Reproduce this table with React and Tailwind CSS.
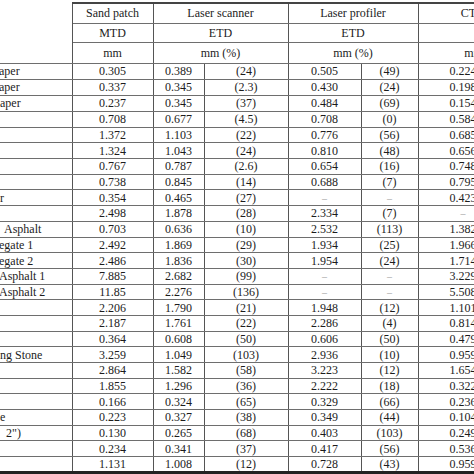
import React from "react";

// visible part of a cropped table: label column and CT column are cut by the frame
const rows = [
  { l: "aper", lc: "-ml-px", h: "h-[16px]", v: ["0.305", "0.389", "(24)", "0.505", "(49)", "0.224"] },
  { l: "aper", lc: "-ml-px", h: "h-[16px]", v: ["0.337", "0.345", "(2.3)", "0.430", "(24)", "0.198"] },
  { l: "aper", lc: "ml-0", h: "h-[16px]", v: ["0.237", "0.345", "(37)", "0.484", "(69)", "0.154"] },
  { l: "", lc: "ml-0", h: "h-[16px]", v: ["0.708", "0.677", "(4.5)", "0.708", "(0)", "0.584"] },
  { l: "", lc: "ml-0", h: "h-[15.7px]", v: ["1.372", "1.103", "(22)", "0.776", "(56)", "0.685"] },
  { l: "", lc: "ml-0", h: "h-[15.7px]", v: ["1.324", "1.043", "(24)", "0.810", "(48)", "0.656"] },
  { l: "", lc: "ml-0", h: "h-[15.7px]", v: ["0.767", "0.787", "(2.6)", "0.654", "(16)", "0.748"] },
  { l: "", lc: "ml-0", h: "h-[15.7px]", v: ["0.738", "0.845", "(14)", "0.688", "(7)", "0.795"] },
  { l: "r", lc: "ml-0", h: "h-[15.7px]", v: ["0.354", "0.465", "(27)", "–", "–", "0.423"] },
  { l: "", lc: "ml-0", h: "h-[15.7px]", v: ["2.498", "1.878", "(28)", "2.334", "(7)", "–"] },
  { l: "Asphalt", lc: "ml-[4px]", h: "h-[15.7px]", v: ["0.703", "0.636", "(10)", "2.532", "(113)", "1.382"] },
  { l: "egate 1", lc: "-ml-px", h: "h-[15.7px]", v: ["2.492", "1.869", "(29)", "1.934", "(25)", "1.966"] },
  { l: "egate 2", lc: "-ml-px", h: "h-[15.7px]", v: ["2.486", "1.836", "(30)", "1.954", "(24)", "1.714"] },
  { l: "Asphalt 1", lc: "-ml-px", h: "h-[15.7px]", v: ["7.885", "2.682", "(99)", "–", "–", "3.229"] },
  { l: "Asphalt 2", lc: "-ml-px", h: "h-[15.7px]", v: ["11.85", "2.276", "(136)", "–", "–", "5.508"] },
  { l: "", lc: "ml-0", h: "h-[15.7px]", v: ["2.206", "1.790", "(21)", "1.948", "(12)", "1.101"] },
  { l: "", lc: "ml-0", h: "h-[15.7px]", v: ["2.187", "1.761", "(22)", "2.286", "(4)", "0.814"] },
  { l: "", lc: "ml-0", h: "h-[15.7px]", v: ["0.364", "0.608", "(50)", "0.606", "(50)", "0.479"] },
  { l: "ng Stone", lc: "ml-0", h: "h-[15.7px]", v: ["3.259", "1.049", "(103)", "2.936", "(10)", "0.959"] },
  { l: "", lc: "ml-0", h: "h-[15.7px]", v: ["2.864", "1.582", "(58)", "3.223", "(12)", "1.654"] },
  { l: "", lc: "ml-0", h: "h-[15.7px]", v: ["1.855", "1.296", "(36)", "2.222", "(18)", "0.322"] },
  { l: "", lc: "ml-0", h: "h-[15.7px]", v: ["0.166", "0.324", "(65)", "0.329", "(66)", "0.236"] },
  { l: "e", lc: "ml-0", h: "h-[15.7px]", v: ["0.223", "0.327", "(38)", "0.349", "(44)", "0.104"] },
  { l: "2\")", lc: "ml-[6px]", h: "h-[15.7px]", v: ["0.130", "0.265", "(68)", "0.403", "(103)", "0.249"] },
  { l: "", lc: "ml-0", h: "h-[15.7px]", v: ["0.234", "0.341", "(37)", "0.417", "(56)", "0.536"] },
  { l: "", lc: "ml-0", h: "h-[15.7px]", v: ["1.131", "1.008", "(12)", "0.728", "(43)", "0.959"] },
];

const Val = ({ t }) =>
  t === "–" ? <span className="text-[#9a9a9a] text-[10px]">–</span> : t;

const App = () => {
  return (
    <div className="w-[474px] h-[474px] overflow-hidden bg-white pt-[2px]">
      <table
        className="w-[550px] table-fixed border-collapse text-[12px] leading-none text-[#1c1c1c]"
        style={{ fontFamily: '"Liberation Serif", "Times New Roman", serif' }}
      >
        <colgroup>
          <col className="w-[72px]" />
          <col className="w-[81px]" />
          <col className="w-[51px]" />
          <col className="w-[84px]" />
          <col className="w-[73px]" />
          <col className="w-[57px]" />
          <col className="w-[90px]" />
          <col className="w-[42px]" />
        </colgroup>
        <thead>
          <tr className="h-[20px]">
            <th rowSpan={3} className="border-r border-r-[#555] border-b border-b-[#6e6e6e] font-normal" />
            <th className="border-t-2 border-t-[#444] border-x border-x-[#555] border-b border-b-[#6e6e6e] font-normal">
              Sand patch
            </th>
            <th colSpan={2} className="border-t-2 border-t-[#444] border-x border-x-[#555] border-b border-b-[#6e6e6e] font-normal">
              Laser scanner
            </th>
            <th colSpan={2} className="border-t-2 border-t-[#444] border-x border-x-[#555] border-b border-b-[#6e6e6e] font-normal">
              Laser profiler
            </th>
            <th colSpan={2} className="border-t-2 border-t-[#444] border-x border-x-[#555] border-b border-b-[#6e6e6e] font-normal">
              CT Meter
            </th>
          </tr>
          <tr className="h-[19.8px]">
            <th className="border-x border-x-[#555] border-b border-b-[#6e6e6e] font-normal">MTD</th>
            <th colSpan={2} className="border-x border-x-[#555] border-b border-b-[#6e6e6e] font-normal">ETD</th>
            <th colSpan={2} className="border-x border-x-[#555] border-b border-b-[#6e6e6e] font-normal">ETD</th>
            <th colSpan={2} className="border-x border-x-[#555] border-b border-b-[#6e6e6e] font-normal"></th>
          </tr>
          <tr className="h-[20.4px]">
            <th className="border-x border-x-[#555] border-b border-b-[#6e6e6e] font-normal">mm</th>
            <th colSpan={2} className="border-x border-x-[#555] border-b border-b-[#6e6e6e] font-normal">mm (%)</th>
            <th colSpan={2} className="border-x border-x-[#555] border-b border-b-[#6e6e6e] font-normal">mm (%)</th>
            <th colSpan={2} className="border-x border-x-[#555] border-b border-b-[#6e6e6e] font-normal">mm (%)</th>
          </tr>
        </thead>
        <tbody>
          {rows.map((r, i) => {
            const last = i === rows.length - 1;
            const rowLine = last ? "border-b-[3px] border-b-[#222]" : "border-b border-b-[#6e6e6e]";
            return (
              <tr key={i}>
                <td className={`${r.h} ${rowLine} border-r border-r-[#555] whitespace-nowrap overflow-hidden p-0`}>
                  <span className={`block ${r.lc}`}>{r.l}</span>
                </td>
                {r.v.map((t, j) => (
                  <td key={j} className={`${r.h} ${rowLine} border-x border-x-[#555] text-center p-0 whitespace-nowrap`}>
                    <Val t={t} />
                  </td>
                ))}
                <td className={`${r.h} ${rowLine} border-x border-x-[#555] p-0`} />
              </tr>
            );
          })}
        </tbody>
      </table>
    </div>
  );
};

export default App;
